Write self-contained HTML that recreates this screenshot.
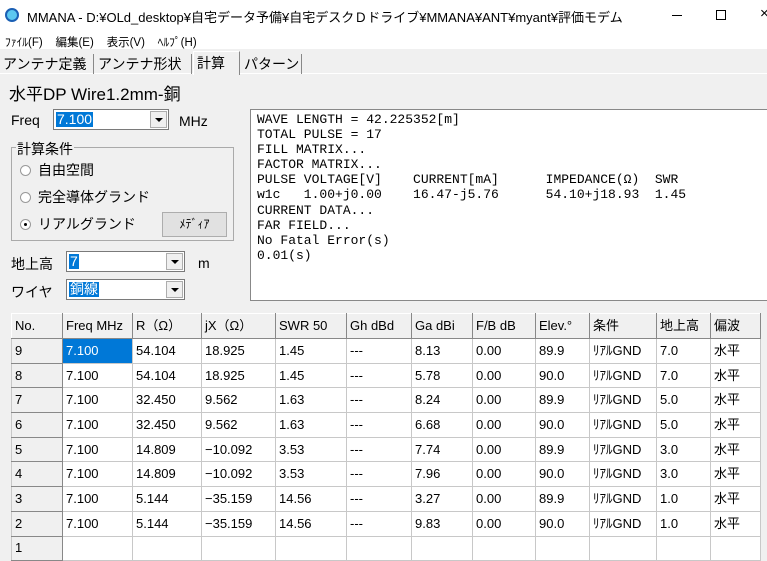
<!DOCTYPE html>
<html><head><meta charset="utf-8"><style>
*{margin:0;padding:0;box-sizing:border-box}
body{width:767px;height:543px;overflow:hidden;background:#f0f0f0;font-family:"Liberation Sans","Noto Sans CJK JP",sans-serif;font-size:13px;color:#000;position:relative}
.a{position:absolute;white-space:nowrap}
.combo{position:absolute;background:#fff;border:1px solid #7a7a7a;height:21px}
.combo .sel{position:absolute;left:2px;top:2px;height:15px;background:#0078d7;color:#fff;font-size:14px;line-height:15px;padding:0 1px}
.combo .btn{position:absolute;right:1px;top:1px;width:17px;height:17px;background:#f0f0f0;border:1px solid #adadad}
.combo .btn:after{content:"";position:absolute;left:4px;top:6px;border-left:4px solid transparent;border-right:4px solid transparent;border-top:4px solid #000}
table{position:absolute;left:11px;top:313px;border-collapse:collapse;background:#fff;font-size:13px}
td{border:1px solid #c8c8c8;height:24.7px;padding:0 3px;white-space:nowrap;overflow:hidden;line-height:16px}
tr.h td{background:#f0f0f0;border-right:1px solid #888;border-bottom:1px solid #888;border-left:1px solid #fff;border-top:1px solid #fff;height:25px}
td.n{background:#f0f0f0;border-right:1px solid #888;border-bottom:1px solid #888}
pre{font-family:"Liberation Mono",monospace;font-size:13px;line-height:15.1px}
</style></head><body>
<div class="a" style="left:0;top:0;width:767px;height:32px;background:#fff"></div>
<div class="a" style="left:5px;top:8px;width:14px;height:14px;border:2px solid #1a5fb4;border-radius:50%;background:#5cc8f0"></div>
<div class="a" style="left:27px;top:7px;font-size:13px">MMANA - D:¥OLd_desktop¥自宅データ予備¥自宅デスクＤドライブ¥MMANA¥ANT¥myant¥評価モデム</div>
<div class="a" style="left:672px;top:15px;width:10px;height:1px;background:#000"></div>
<div class="a" style="left:716px;top:10px;width:10px;height:10px;border:1px solid #000"></div>
<div class="a" style="left:760px;top:5px;font-size:15px">×</div>
<div class="a" style="left:0;top:32px;width:767px;height:17px;background:#fff"></div>
<div class="a" style="left:5px;top:34px;font-size:11.5px">ﾌｧｲﾙ(F)&nbsp;&nbsp;&nbsp;&nbsp;編集(E)&nbsp;&nbsp;&nbsp;&nbsp;表示(V)&nbsp;&nbsp;&nbsp;&nbsp;ﾍﾙﾌﾟ(H)</div>
<div class="a" style="left:0;top:73px;width:767px;height:1px;background:#fff"></div>
<div class="a" style="left:1px;top:54px;width:93px;height:20px;border-right:1px solid #888;font-size:14px;padding-left:2px">アンテナ定義</div>
<div class="a" style="left:96px;top:54px;width:96px;height:20px;border-right:1px solid #888;font-size:14px;padding-left:2px">アンテナ形状</div>
<div class="a" style="left:193px;top:51px;width:47px;height:24px;border-right:1px solid #888;border-left:1px solid #fff;border-top:1px solid #fff;font-size:14px;padding:1px 0 0 3px;background:#f0f0f0">計算</div>
<div class="a" style="left:242px;top:54px;width:60px;height:20px;border-right:1px solid #888;font-size:14px;padding-left:2px">パターン</div>
<div class="a" style="left:9px;top:80px;font-size:17px">水平DP Wire1.2mm-銅</div>
<div class="a" style="left:11px;top:112px;font-size:14px">Freq</div>
<div class="combo" style="left:53px;top:109px;width:116px"><div class="sel">7.100</div><div class="btn"></div></div>
<div class="a" style="left:179px;top:113px;font-size:14px">MHz</div>
<div class="a" style="left:11px;top:147px;width:223px;height:94px;border:1px solid #aaa"></div>
<div class="a" style="left:16px;top:139px;font-size:14px;background:#f0f0f0;padding:0 1px">計算条件</div>
<div class="a" style="left:20px;top:165px;width:11px;height:11px;border-radius:50%;border:1px solid #999;background:#fff"></div>
<div class="a" style="left:38px;top:160px;font-size:14px">自由空間</div>
<div class="a" style="left:20px;top:192px;width:11px;height:11px;border-radius:50%;border:1px solid #999;background:#fff"></div>
<div class="a" style="left:38px;top:187px;font-size:14px">完全導体グランド</div>
<div class="a" style="left:20px;top:219px;width:11px;height:11px;border-radius:50%;border:1px solid #999;background:#fff"><div style="position:absolute;left:3px;top:3px;width:3px;height:3px;background:#000;border-radius:50%"></div></div>
<div class="a" style="left:38px;top:214px;font-size:14px">リアルグランド</div>
<div class="a" style="left:162px;top:212px;width:65px;height:25px;border:1px solid #adadad;background:#e1e1e1;font-size:12px;text-align:center;line-height:23px">ﾒﾃﾞｨｱ</div>
<div class="a" style="left:11px;top:254px;font-size:14px">地上高</div>
<div class="combo" style="left:66px;top:251px;width:119px"><div class="sel">7</div><div class="btn"></div></div>
<div class="a" style="left:198px;top:255px;font-size:14px">m</div>
<div class="a" style="left:11px;top:282px;font-size:14px">ワイヤ</div>
<div class="combo" style="left:66px;top:279px;width:119px"><div class="sel">銅線</div><div class="btn"></div></div>
<div class="a" style="left:250px;top:109px;width:520px;height:192px;background:#fff;border:1px solid #888;border-right:none;padding:2px 0 0 6px"><pre>WAVE LENGTH = 42.225352[m]
TOTAL PULSE = 17
FILL MATRIX...
FACTOR MATRIX...
PULSE VOLTAGE[V]    CURRENT[mA]      IMPEDANCE(Ω)  SWR
w1c   1.00+j0.00    16.47-j5.76      54.10+j18.93  1.45
CURRENT DATA...
FAR FIELD...
No Fatal Error(s)
0.01(s)</pre></div>
<table>
<colgroup><col style="width:51px"><col style="width:70px"><col style="width:69px"><col style="width:74px"><col style="width:71px"><col style="width:65px"><col style="width:61px"><col style="width:63px"><col style="width:54px"><col style="width:67px"><col style="width:54px"><col style="width:50px"></colgroup>
<tr class="h"><td>No.</td><td>Freq MHz</td><td>R（Ω）</td><td>jX（Ω）</td><td>SWR 50</td><td>Gh dBd</td><td>Ga dBi</td><td>F/B dB</td><td>Elev.°</td><td>条件</td><td>地上高</td><td>偏波</td></tr>
<tr><td class="n">9</td><td style="background:#0078d7;color:#fff">7.100</td><td>54.104</td><td>18.925</td><td>1.45</td><td>---</td><td>8.13</td><td>0.00</td><td>89.9</td><td>ﾘｱﾙGND</td><td>7.0</td><td>水平</td></tr>
<tr><td class="n">8</td><td>7.100</td><td>54.104</td><td>18.925</td><td>1.45</td><td>---</td><td>5.78</td><td>0.00</td><td>90.0</td><td>ﾘｱﾙGND</td><td>7.0</td><td>水平</td></tr>
<tr><td class="n">7</td><td>7.100</td><td>32.450</td><td>9.562</td><td>1.63</td><td>---</td><td>8.24</td><td>0.00</td><td>89.9</td><td>ﾘｱﾙGND</td><td>5.0</td><td>水平</td></tr>
<tr><td class="n">6</td><td>7.100</td><td>32.450</td><td>9.562</td><td>1.63</td><td>---</td><td>6.68</td><td>0.00</td><td>90.0</td><td>ﾘｱﾙGND</td><td>5.0</td><td>水平</td></tr>
<tr><td class="n">5</td><td>7.100</td><td>14.809</td><td>−10.092</td><td>3.53</td><td>---</td><td>7.74</td><td>0.00</td><td>89.9</td><td>ﾘｱﾙGND</td><td>3.0</td><td>水平</td></tr>
<tr><td class="n">4</td><td>7.100</td><td>14.809</td><td>−10.092</td><td>3.53</td><td>---</td><td>7.96</td><td>0.00</td><td>90.0</td><td>ﾘｱﾙGND</td><td>3.0</td><td>水平</td></tr>
<tr><td class="n">3</td><td>7.100</td><td>5.144</td><td>−35.159</td><td>14.56</td><td>---</td><td>3.27</td><td>0.00</td><td>89.9</td><td>ﾘｱﾙGND</td><td>1.0</td><td>水平</td></tr>
<tr><td class="n">2</td><td>7.100</td><td>5.144</td><td>−35.159</td><td>14.56</td><td>---</td><td>9.83</td><td>0.00</td><td>90.0</td><td>ﾘｱﾙGND</td><td>1.0</td><td>水平</td></tr>
<tr><td class="n">1</td><td></td><td></td><td></td><td></td><td></td><td></td><td></td><td></td><td></td><td></td><td></td></tr>
</table>
</body></html>
